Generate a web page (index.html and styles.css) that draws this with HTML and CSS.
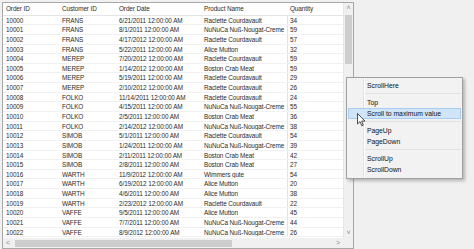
FILE: index.html
```html
<!DOCTYPE html>
<html lang="en">
<head>
    <meta charset="UTF-8">
    <title>Orders</title>
    <link rel="stylesheet" href="styles.css">
</head>
<body>

    <div class="window">
        <div class="datagrid">
            <div class="grid-body">
                <div class="row header">
                    <span>Order ID</span><span>Customer ID</span><span>Order Date</span><span>Product Name</span><span>Quantity</span>
                </div>
                <div class="row"><span>10000</span><span>FRANS</span><span>6/21/2011 12:00:00 AM</span><span>Raclette Courdavault</span><span>34</span></div>
                <div class="row"><span>10001</span><span>FRANS</span><span>8/1/2011 12:00:00 AM</span><span>NuNuCa Nuß-Nougat-Creme</span><span>59</span></div>
                <div class="row"><span>10002</span><span>FRANS</span><span>4/17/2012 12:00:00 AM</span><span>Raclette Courdavault</span><span>57</span></div>
                <div class="row"><span>10003</span><span>FRANS</span><span>5/22/2011 12:00:00 AM</span><span>Alice Mutton</span><span>32</span></div>
                <div class="row"><span>10004</span><span>MEREP</span><span>7/20/2012 12:00:00 AM</span><span>Raclette Courdavault</span><span>59</span></div>
                <div class="row"><span>10005</span><span>MEREP</span><span>1/14/2012 12:00:00 AM</span><span>Boston Crab Meat</span><span>59</span></div>
                <div class="row"><span>10006</span><span>MEREP</span><span>5/19/2011 12:00:00 AM</span><span>Raclette Courdavault</span><span>29</span></div>
                <div class="row"><span>10007</span><span>MEREP</span><span>2/10/2012 12:00:00 AM</span><span>Raclette Courdavault</span><span>26</span></div>
                <div class="row"><span>10008</span><span>FOLKO</span><span>11/14/2011 12:00:00 AM</span><span>Raclette Courdavault</span><span>24</span></div>
                <div class="row"><span>10009</span><span>FOLKO</span><span>4/15/2011 12:00:00 AM</span><span>NuNuCa Nuß-Nougat-Creme</span><span>55</span></div>
                <div class="row"><span>10010</span><span>FOLKO</span><span>2/5/2011 12:00:00 AM</span><span>Boston Crab Meat</span><span>36</span></div>
                <div class="row"><span>10011</span><span>FOLKO</span><span>2/14/2012 12:00:00 AM</span><span>NuNuCa Nuß-Nougat-Creme</span><span>38</span></div>
                <div class="row"><span>10012</span><span>SIMOB</span><span>5/1/2011 12:00:00 AM</span><span>Raclette Courdavault</span><span>54</span></div>
                <div class="row"><span>10013</span><span>SIMOB</span><span>1/24/2011 12:00:00 AM</span><span>NuNuCa Nuß-Nougat-Creme</span><span>39</span></div>
                <div class="row"><span>10014</span><span>SIMOB</span><span>2/11/2011 12:00:00 AM</span><span>Boston Crab Meat</span><span>42</span></div>
                <div class="row"><span>10015</span><span>SIMOB</span><span>2/8/2011 12:00:00 AM</span><span>Boston Crab Meat</span><span>27</span></div>
                <div class="row"><span>10016</span><span>WARTH</span><span>11/9/2012 12:00:00 AM</span><span>Wimmers gute</span><span>54</span></div>
                <div class="row"><span>10017</span><span>WARTH</span><span>6/19/2012 12:00:00 AM</span><span>Alice Mutton</span><span>20</span></div>
                <div class="row"><span>10018</span><span>WARTH</span><span>4/6/2011 12:00:00 AM</span><span>Alice Mutton</span><span>38</span></div>
                <div class="row"><span>10019</span><span>WARTH</span><span>2/23/2012 12:00:00 AM</span><span>Raclette Courdavault</span><span>22</span></div>
                <div class="row"><span>10020</span><span>VAFFE</span><span>9/5/2011 12:00:00 AM</span><span>Alice Mutton</span><span>45</span></div>
                <div class="row"><span>10021</span><span>VAFFE</span><span>7/7/2011 12:00:00 AM</span><span>NuNuCa Nuß-Nougat-Creme</span><span>44</span></div>
                <div class="row"><span>10022</span><span>VAFFE</span><span>8/9/2012 12:00:00 AM</span><span>NuNuCa Nuß-Nougat-Creme</span><span>26</span></div>
            </div>

            <!-- vertical scrollbar -->
            <div class="vscroll">
                <span class="arrow">&#x02C4;</span>
                <div class="track"><div class="vthumb"></div></div>
                <span class="arrow">&#x02C5;</span>
            </div>

            <!-- horizontal scrollbar -->
            <div class="hscroll">
                <span class="arrow">&#x02C2;</span>
                <div class="track"><div class="hthumb"></div></div>
                <span class="arrow">&#x02C3;</span>
            </div>
            <div class="corner"></div>
        </div>
        <div class="side"></div>
    </div>

    <div class="context-menu">
        <div class="item">ScrollHere</div>
        <div class="sep"></div>
        <div class="item">Top</div>
        <div class="item active">Scroll to maximum value</div>
        <div class="sep"></div>
        <div class="item">PageUp</div>
        <div class="item">PageDown</div>
        <div class="sep"></div>
        <div class="item">ScrollUp</div>
        <div class="item">ScrollDown</div>
    </div>

    <svg class="cursor" width="9" height="14" viewBox="0 0 9 14">
        <path d="M0.5 0.5 L0.5 11 L3 8.6 L4.8 12.8 L6.3 12.1 L4.6 8.1 L8 8.1 Z" fill="#fff" stroke="#222" stroke-width="0.8" stroke-linejoin="round"/>
    </svg>

</body>
</html>
```

FILE: styles.css
```css
/* Window with a data grid on the left and an empty panel on the right */
body {
    margin: 0;
    background-color: #f0f0f0;
    font-family: "Liberation Sans", Arial, sans-serif;
    font-size: 6.4px;
    color: #2a2a2a;
    overflow: hidden;
}

.window {
    display: flex;
    padding: 2px 0 0 2px;
    height: 249px;
    box-sizing: border-box;
}

.datagrid {
    display: grid;
    grid-template-columns: 340px 10px;
    grid-template-rows: 235px 10px;
    border: 1px solid #a8a8a8;
    background-color: #fff;
}

.grid-body {
    overflow: hidden;
}

.row {
    display: grid;
    grid-template-columns: 56px 57px 85px 86px 56px;
    height: 9.65px;
    line-height: 9.65px;
    box-sizing: border-box;
    border-bottom: 1px solid #f1f1f1;
}

.row span {
    padding-left: 3px;
    white-space: nowrap;
    overflow: hidden;
    letter-spacing: -0.1px;
}

.row span:last-child {
    border-left: 1px solid #e2e2e2;
    padding-left: 2px;
}

.row.header {
    height: 12.6px;
    line-height: 12.6px;
    border-bottom: 1px solid #e4e4e4;
}

.row.header span:last-child {
    border-left-color: transparent;
}

/* scrollbars */
.vscroll, .hscroll {
    display: flex;
    background-color: #f0f0f0;
    color: #8a8a8a;
    align-items: center;
}

.vscroll {
    flex-direction: column;
    border-left: 1px solid #e6e6e6;
}

.vscroll .track {
    flex: 1;
    width: 100%;
    padding-top: 2px;
}

.vthumb {
    width: 7px;
    height: 49px;
    margin: 0 auto;
    background-color: #cdcdcd;
}

.hscroll .track {
    flex: 1;
    padding-left: 2px;
}

.hthumb {
    width: 217px;
    height: 7px;
    background-color: #cdcdcd;
}

.arrow {
    width: 10px;
    height: 10px;
    line-height: 10px;
    text-align: center;
    font-size: 7px;
}

.corner {
    background-color: #f0f0f0;
}

.side {
    flex: 1;
}

/* context menu over the side panel */
.context-menu {
    position: absolute;
    left: 346px;
    top: 77px;
    width: 113px;
    padding: 2px 1px 3px 1px;
    background-color: #f2f2f2;
    border: 1px solid #a0a0a0;
    box-shadow: 2px 2px 3px rgba(0, 0, 0, 0.25);
    background-image: linear-gradient(to right, transparent 16px, #e2e2e2 16px, #e2e2e2 17px, #fff 17px, #fff 18px, transparent 18px);
    font-size: 6.8px;
    color: #111;
}

.item {
    height: 11px;
    line-height: 11px;
    padding-left: 19px;
    box-sizing: border-box;
}

.item.active {
    background-color: #d1e5f9;
    outline: 1px solid #a8cdf3;
    outline-offset: -1px;
}

.sep {
    height: 6px;
    margin-left: 17px;
    background: linear-gradient(#e0e0e0, #e0e0e0) no-repeat 0 2px / 100% 1px;
}

.cursor {
    position: absolute;
    left: 357px;
    top: 113px;
}
```
